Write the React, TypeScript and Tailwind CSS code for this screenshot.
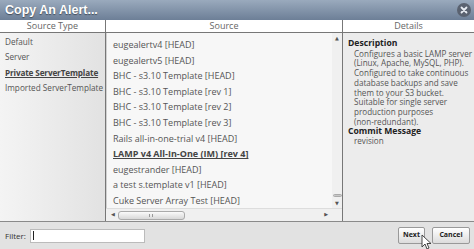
import React from 'react';

const sourceTypes = ['Default', 'Server', 'Private ServerTemplate', 'Imported ServerTemplate'];

const sources = [
    'eugealertv4 [HEAD]',
    'eugealertv5 [HEAD]',
    'BHC - s3.10 Template [HEAD]',
    'BHC - s3.10 Template [rev 1]',
    'BHC - s3.10 Template [rev 2]',
    'BHC - s3.10 Template [rev 3]',
    'Rails all-in-one-trial v4 [HEAD]',
    'LAMP v4 All-In-One (IM) [rev 4]',
    'eugestrander [HEAD]',
    'a test s.template v1 [HEAD]',
    'Cuke Server Array Test [HEAD]'
];

const description = [
    'Configures a basic LAMP server',
    '(Linux, Apache, MySQL, PHP).',
    'Configured to take continuous',
    'database backups and save',
    'them to your S3 bucket.',
    'Suitable for single server',
    'production purposes',
    '(non-redundant).'
];

export default function App() {
    return (
        <div className="relative w-[474px] h-[249px] flex flex-col bg-[#e4e4e4] overflow-hidden text-[#555] font-['Open_Sans','DejaVu_Sans',sans-serif]">
            {/* title bar */}
            <div className="h-[20px] shrink-0 flex items-center justify-between pl-[5px] pr-[3px] bg-gradient-to-b from-[#9aaabd] to-[#6d7f97]">
                <span className="text-white font-bold text-[12.5px] leading-none font-['Liberation_Sans',sans-serif] [text-shadow:0_1px_1px_rgba(0,0,0,0.45)]">Copy An Alert...</span>
                <span className="w-[14px] h-[14px] rounded-full bg-[#5a6270] flex items-center justify-center">
                    <svg width="8" height="8" viewBox="0 0 8 8">
                        <path d="M1.5 1.5 L6.5 6.5 M6.5 1.5 L1.5 6.5" stroke="#e8ecf2" strokeWidth="1.8" strokeLinecap="round" />
                    </svg>
                </span>
            </div>

            {/* columns */}
            <div className="flex flex-1 min-h-0 border-b border-[#8a8a8a]">
                {/* source type */}
                <div className="w-[106px] shrink-0 flex flex-col border-r border-[#777]">
                    <div className="h-[13px] shrink-0 bg-white border-b border-[#777] text-center text-[9px] leading-[12px] text-[#666]">Source Type</div>
                    <div className="flex-1 bg-gradient-to-r from-[#f4f4f4] to-[#e2e2e2] pt-[1px] pl-[5px] text-[8.2px] leading-[15.4px] whitespace-nowrap overflow-hidden">
                        {sourceTypes.map((t) => (
                            <div key={t} className={t === 'Private ServerTemplate' ? 'font-bold underline text-[#444] tracking-[-0.15px]' : ''}>{t}</div>
                        ))}
                    </div>
                </div>

                {/* source */}
                <div className="w-[237px] shrink-0 flex flex-col border-r border-[#777]">
                    <div className="h-[13px] shrink-0 bg-white border-b border-[#777] text-center text-[9px] leading-[12px] text-[#666]">Source</div>
                    <div className="flex-1 min-h-0 flex">
                        <div className="flex-1 bg-[#f7f7f7] border-l border-[#d0d0d0] overflow-hidden pl-[6px] pt-[4px] text-[9px] leading-[15.6px] whitespace-nowrap">
                            {sources.map((s) => (
                                <div key={s} className={s.startsWith('LAMP') ? 'font-bold underline text-[#444]' : ''}>{s}</div>
                            ))}
                        </div>
                        <div className="w-[10px] shrink-0 bg-[#f0f0f0] flex flex-col items-center justify-between pt-[2px] pb-[1px] text-[5px] text-[#555]">
                            <span>▲</span>
                            <div className="flex flex-col items-center gap-[3px]">
                                <div className="w-[9px] h-[3px] rounded-sm bg-[#c8c8c8] border border-[#aaa]" />
                                <span>▼</span>
                            </div>
                        </div>
                    </div>
                    <div className="h-[13px] shrink-0 flex items-center bg-[#f0f0f0] border-t border-[#ddd] pl-[5px] pr-[14px] text-[5px] text-[#555]">
                        <span>◀</span>
                        <div className="ml-[3px] w-[67px] h-[9px] rounded-[3px] bg-gradient-to-b from-[#fafafa] to-[#d8d8d8] border border-[#aaa] flex items-center justify-center">
                            <div className="w-[4px] h-[3px] border-x border-[#999]" />
                        </div>
                        <span className="ml-auto">▶</span>
                    </div>
                </div>

                {/* details */}
                <div className="flex-1 flex flex-col">
                    <div className="h-[13px] shrink-0 bg-white border-b border-[#777] text-center text-[9px] leading-[12px] text-[#666]">Details</div>
                    <div className="flex-1 bg-[#ececec] pl-[5px] pt-[6px] text-[8.1px] leading-[9.7px] whitespace-nowrap overflow-hidden">
                        <div className="font-bold text-[#222] text-[8.6px]">Description</div>
                        <div className="pl-[6px]">
                            {description.map((l) => (
                                <div key={l}>{l}</div>
                            ))}
                        </div>
                        <div className="font-bold text-[#222] text-[8.6px] leading-[10px]">Commit Message</div>
                        <div className="pl-[6px]">revision</div>
                    </div>
                </div>
            </div>

            {/* footer */}
            <div className="h-[27px] shrink-0 flex items-center pl-[5px] pr-[4px] bg-[#e2e2e2]">
                <span className="text-[8px] text-[#333]">Filter:</span>
                <div className="ml-[4px] w-[115px] h-[14px] bg-white border border-[#bbb] flex items-center pl-[2px]">
                    <div className="w-px h-[9px] bg-[#222]" />
                </div>
                <div className="ml-auto flex gap-[7px]">
                    <button className="h-[17px] w-[27px] text-[7px] font-bold text-[#222] rounded-[2px] border border-[#999] bg-gradient-to-b from-white to-[#dcdcdc]">Next</button>
                    <button className="h-[17px] w-[38px] text-[7px] font-bold text-[#222] rounded-[2px] border border-[#999] bg-gradient-to-b from-white to-[#dcdcdc]">Cancel</button>
                </div>
            </div>

            {/* mouse pointer */}
            <svg className="absolute left-[421px] top-[234px]" width="11" height="16" viewBox="0 0 11 16">
                <path d="M1 1 L1 13 L4 10 L6 15 L8 14 L6 9.5 L10 9.5 Z" fill="#fff" stroke="#333" strokeWidth="0.9" strokeLinejoin="round" />
            </svg>
        </div>
    );
}
